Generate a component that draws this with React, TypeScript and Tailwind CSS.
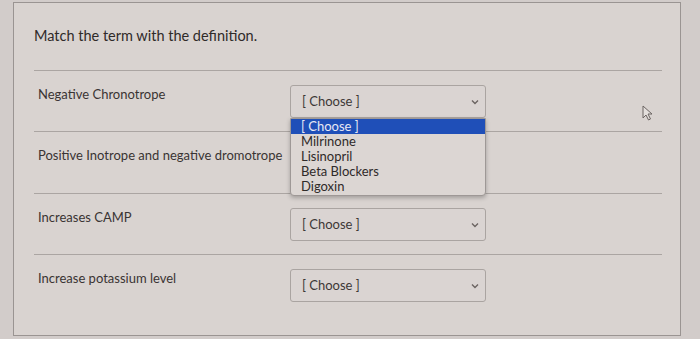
import React from "react";

const font = { fontFamily: "Lato, 'Open Sans', sans-serif" };

function Chevron() {
  return (
    <svg width="8" height="6" viewBox="0 0 8 6" className="shrink-0">
      <polyline points="1,1.5 4,4.5 7,1.5" fill="none" stroke="#6b6462" strokeWidth="1.4" />
    </svg>
  );
}

function Select({ hidden }: { hidden?: boolean }) {
  return (
    <div className="mt-[14px] flex h-[33px] w-[196px] items-center justify-between rounded-[3px] border border-[#aaa4a1] bg-[#dad4d2] pl-[11px] pr-[6px]">
      {hidden ? <span /> : <span className="text-[13px] text-[#3d3837]">[ Choose ]</span>}
      <Chevron />
    </div>
  );
}

function Row({ label, h, hidden }: { label: string; h: string; hidden?: boolean }) {
  return (
    <div className={"flex border-t border-[#aba5a2] " + h}>
      <div className="w-[256px] pl-[4px] pt-[16px] text-[13px] leading-[15px] text-[#3a3433]">{label}</div>
      <Select hidden={hidden} />
    </div>
  );
}

export default function App() {
  return (
    <div className="relative h-[339px] w-[700px] overflow-hidden bg-[#d2ccca]" style={font}>
      <div className="ml-[13px] mt-[2px] h-[334px] w-[668px] border border-[#9a9492] bg-[#d9d3d0]">
        <div className="pl-[20px] pr-[18px]">
          <div className="pt-[24px] text-[14.5px] leading-[18px] text-[#2f2a29]">Match the term with the definition.</div>
          <div className="mt-[25px]">
            <Row label="Negative Chronotrope" h="h-[61px]" />
            <Row label="Positive Inotrope and negative dromotrope" h="h-[62px]" hidden />
            <Row label="Increases CAMP" h="h-[61px]" />
            <Row label="Increase potassium level" h="h-[80px]" />
          </div>
        </div>
      </div>

      {/* open dropdown list */}
      <div className="absolute left-[290px] top-[118px] w-[196px] overflow-hidden rounded-b-[4px] border border-[#9e9896] bg-[#dcd6d3] shadow-[0_2px_4px_rgba(0,0,0,0.25)] text-[13px] leading-[15px] text-[#2f2a29]">
        <div className="bg-[#1f4fb8] pl-[10px] text-[#e8e8f4]">[ Choose ]</div>
        <div className="pl-[10px]">Milrinone</div>
        <div className="pl-[10px]">Lisinopril</div>
        <div className="pl-[10px]">Beta Blockers</div>
        <div className="pb-[1px] pl-[10px]">Digoxin</div>
      </div>

      {/* mouse cursor */}
      <svg className="absolute left-[642px] top-[105px]" width="12" height="16" viewBox="0 0 12 16">
        <path d="M1 1 L1 13 L4 10 L6.5 15 L8.5 14 L6 9 L10 9 Z" fill="#e4dfdc" stroke="#6b6462" strokeWidth="1" strokeLinejoin="round" />
      </svg>
    </div>
  );
}
